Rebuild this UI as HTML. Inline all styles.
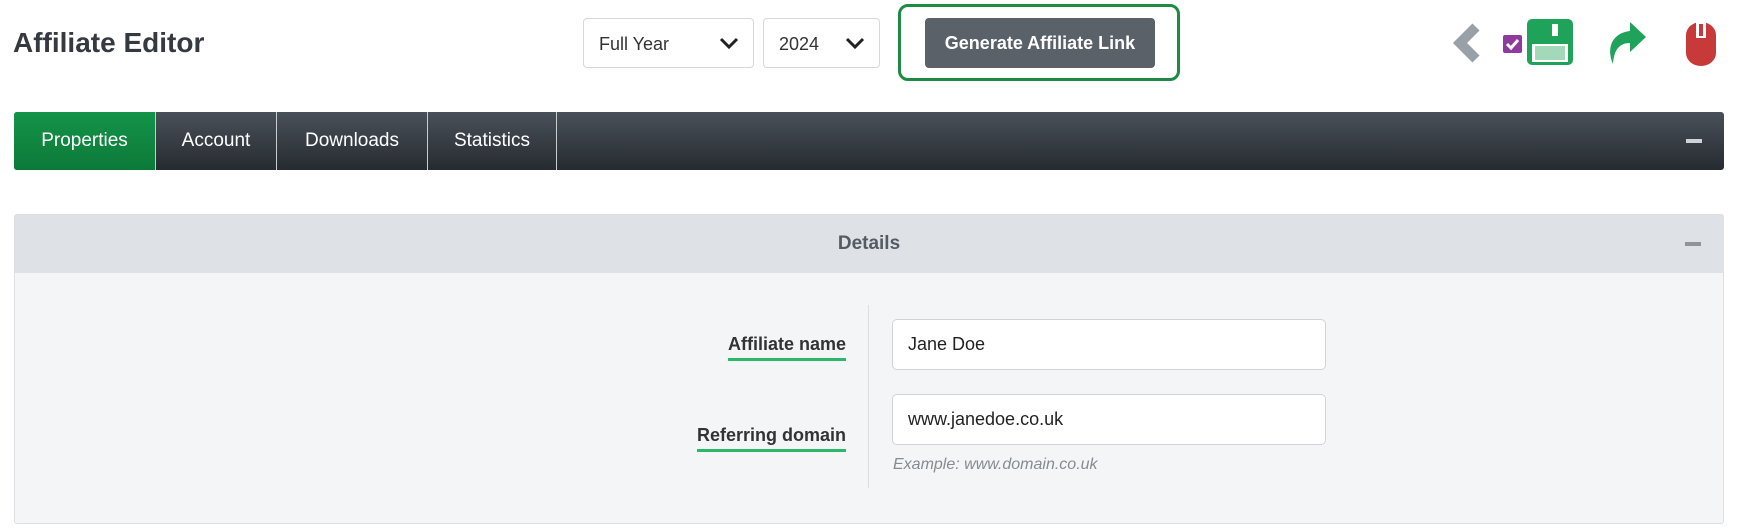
<!DOCTYPE html>
<html><head><meta charset="utf-8"><style>
*{box-sizing:border-box;margin:0;padding:0}
body{width:1740px;height:528px;background:#fff;font-family:"Liberation Sans",sans-serif;position:relative;overflow:hidden;color:#333}
.abs{position:absolute}
.sel{position:absolute;top:18px;height:50px;border:1px solid #d4d7db;border-radius:4px;background:#fff;font-size:18px;color:#333;padding:15px 0 0 15px}
.sel svg{position:absolute;right:14px;top:18px}
.tab{position:absolute;top:0;height:58px;color:#fff;font-size:19px;text-align:center;line-height:58px;border-right:1px solid #c8ccd0}
.lbl{position:absolute;right:894px;font-size:18px;font-weight:bold;color:#333;border-bottom:3px solid #2cb86a;padding-bottom:3px}
.inp{position:absolute;left:892px;width:434px;height:51px;border:1px solid #cfd4da;border-radius:5px;background:#fff;font-size:18px;padding:14px 0 0 15px;color:#222}
</style></head><body>
<div class="abs" style="left:13px;top:27px;font-size:28px;font-weight:bold;color:#343a40">Affiliate Editor</div>

<div class="sel" style="left:583px;width:171px">Full Year<svg width="20" height="12" viewBox="0 0 20 12"><path d="M2 2l8 8 8-8" stroke="#222" stroke-width="3" fill="none"/></svg></div>
<div class="sel" style="left:763px;width:117px">2024<svg width="20" height="12" viewBox="0 0 20 12"><path d="M2 2l8 8 8-8" stroke="#222" stroke-width="3" fill="none"/></svg></div>

<div class="abs" style="left:898px;top:4px;width:282px;height:77px;border:3px solid #1f8a44;border-radius:10px"></div>
<div class="abs" style="left:925px;top:18px;width:230px;height:50px;background:#5b6169;border-radius:4px;color:#fff;font-weight:bold;font-size:18px;text-align:center;line-height:50px">Generate Affiliate Link</div>

<svg class="abs" style="left:1444px;top:20px" width="42" height="46" viewBox="0 0 42 46"><path d="M32 7L16 23l16 16" stroke="#9aa0a7" stroke-width="10" fill="none" stroke-linejoin="miter"/></svg>
<div class="abs" style="left:1503px;top:35px;width:19px;height:18px;background:#8e3a9e;border-radius:2px"><svg width="19" height="18"><path d="M4 9l4 4 7-8" stroke="#fff" stroke-width="3" fill="none"/></svg></div>
<svg class="abs" style="left:1526px;top:18px" width="48" height="48" viewBox="0 0 48 48"><rect x="1" y="1" width="46" height="46" rx="5" fill="#1fa35a"/><rect x="6" y="26" width="36" height="18" fill="#fff"/><rect x="9" y="28" width="30" height="14" fill="#a3d9b8"/><rect x="26" y="6" width="6" height="12" fill="#fff"/></svg>
<svg class="abs" style="left:1606px;top:20px" width="42" height="46" viewBox="0 0 42 46"><path d="M24 2L40 17 24 32V23C14 23 8 29 7 44 0 28 6 13 24 11Z" fill="#1fa35a"/></svg>
<svg class="abs" style="left:1685px;top:21px" width="32" height="46" viewBox="0 0 32 46"><path d="M1 14a15 13 0 0 1 30 0v18a15 13 0 0 1-30 0z" fill="#c8393a"/><rect x="11" y="1" width="10" height="16" fill="#fff"/><rect x="14" y="3" width="4" height="12" fill="#c8393a"/></svg>

<div class="abs" style="left:14px;top:112px;width:1710px;height:58px;background:linear-gradient(#4a5059,#262b31);border-radius:3px">
 <div class="tab" style="left:0;width:142px;background:linear-gradient(#14934a,#0c7a38);border-radius:3px 0 0 3px">Properties</div>
 <div class="tab" style="left:142px;width:121px">Account</div>
 <div class="tab" style="left:263px;width:151px">Downloads</div>
 <div class="tab" style="left:414px;width:129px">Statistics</div>
 <div class="abs" style="right:22px;top:27px;width:16px;height:4px;background:#d0d3d6"></div>
</div>

<div class="abs" style="left:14px;top:214px;width:1710px;height:310px;background:#f4f5f7;border:1px solid #dde0e3;border-radius:3px">
 <div style="height:58px;background:#dee1e5;text-align:center;line-height:58px;font-size:19px;font-weight:bold;color:#555b62">Details</div>
 <div class="abs" style="right:22px;top:27px;width:16px;height:4px;background:#8e949a"></div>
</div>
<div class="abs" style="left:868px;top:305px;width:1px;height:183px;background:#dde0e3"></div>
<div class="lbl" style="top:334px">Affiliate name</div>
<div class="lbl" style="top:425px">Referring domain</div>
<div class="inp" style="top:319px">Jane Doe</div>
<div class="inp" style="top:394px">www.janedoe.co.uk</div>
<div class="abs" style="left:893px;top:456px;font-size:16px;font-style:italic;color:#858b92">Example: www.domain.co.uk</div>
</body></html>
